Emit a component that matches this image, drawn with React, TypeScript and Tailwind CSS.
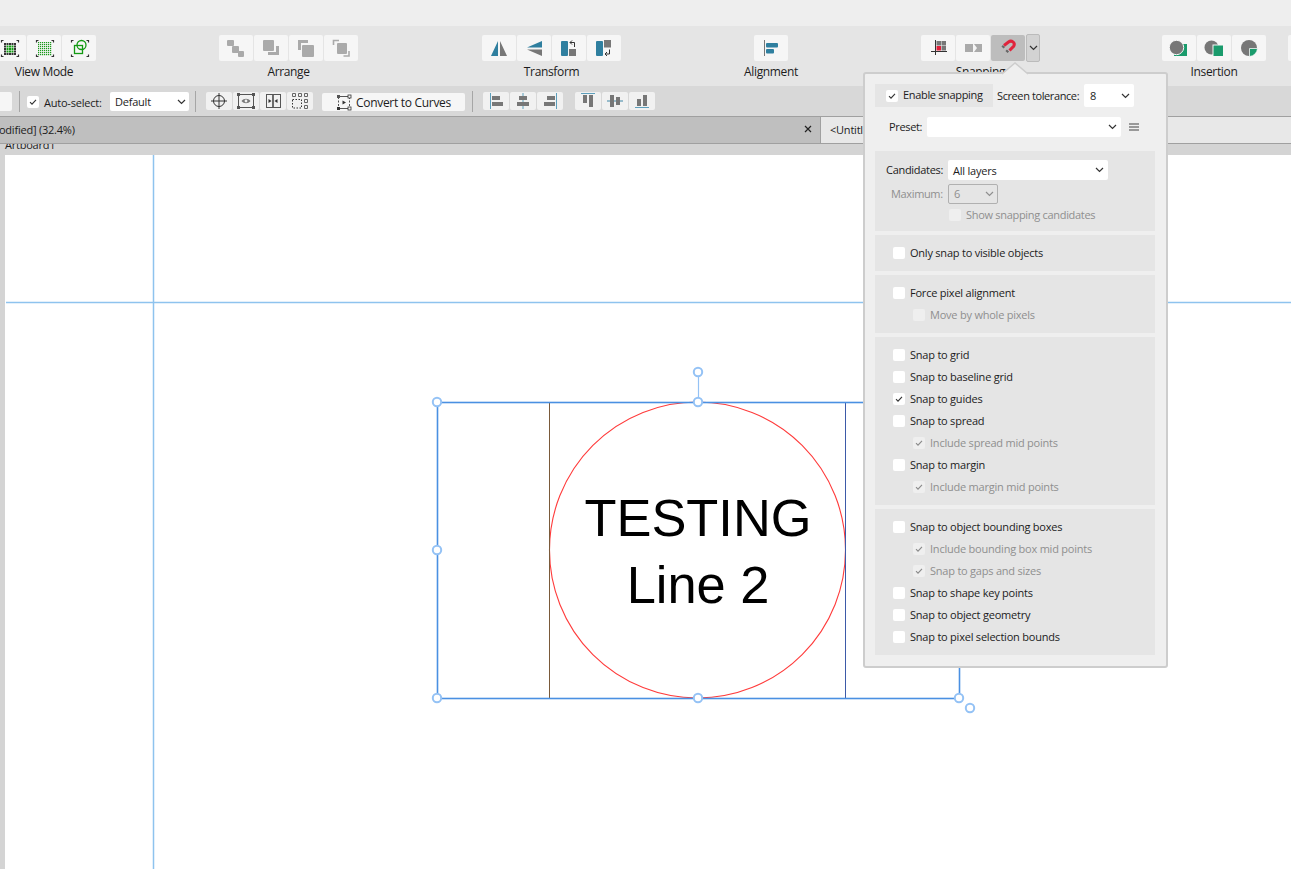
import React from "react";

const TEAL = "#2f7f9f";
const GREY = "#777777";
const LIGHT = "#aaaaaa";
const GREEN = "#1a9b6c";

function Chevron({ x = 0, color = "#333333" }: { x?: number; color?: string }) {
  return (
    <svg width="9" height="6" viewBox="0 0 9 6" className="shrink-0" style={{ marginLeft: x }}>
      <path d="M1 1 L4.5 4.5 L8 1" fill="none" stroke={color} strokeWidth="1.2" />
    </svg>
  );
}

function Tool({ children, active }: { children: React.ReactNode; active?: boolean }) {
  return (
    <div className={`h-[26px] w-[34px] rounded-[2px] ${active ? "bg-[#bdbdbd]" : "bg-[#f6f6f6]"}`}>
      <svg width="34" height="26" viewBox="0 0 34 26">
        {children}
      </svg>
    </div>
  );
}

function SmallTool({ children }: { children: React.ReactNode }) {
  return (
    <div className="h-[18px] w-[26px] rounded-[2px] bg-[#f1f1f1]">
      <svg width="26" height="18" viewBox="0 0 26 18">
        {children}
      </svg>
    </div>
  );
}

function Group({ label, children, className = "" }: { label: string; children: React.ReactNode; className?: string }) {
  return (
    <div className={`flex shrink-0 flex-col items-center ${className}`}>
      <div className="flex h-[26px] items-start gap-px">{children}</div>
      {/* zero width so a long label never widens a one-button group */}
      <div className="mt-[3px] flex w-0 justify-center whitespace-nowrap text-[12px] leading-[16px] tracking-[-0.35px] text-[#1c1c1c]">
        {label}
      </div>
    </div>
  );
}

function Corners({ x1, y1, x2, y2 }: { x1: number; y1: number; x2: number; y2: number }) {
  const d = `M${x1} ${y1 + 2}V${y1}H${x1 + 2} M${x2 - 2} ${y1}H${x2}V${y1 + 2} M${x2} ${y2 - 2}V${y2}H${x2 - 2} M${x1 + 2} ${y2}H${x1}V${y2 - 2}`;
  return <path d={d} fill="none" stroke="#333333" strokeWidth="1.2" />;
}

function DotGrid({ n, x, y, step, size, color, mid }: { n: number; x: number; y: number; step: number; size: number; color: string; mid?: string }) {
  const cells: React.ReactNode[] = [];
  for (let r = 0; r < n; r++) {
    for (let c = 0; c < n; c++) {
      const inner = mid && r > 0 && r < n - 1 && c > 0 && c < n - 1;
      cells.push(<rect key={`${r}-${c}`} x={x + c * step} y={y + r * step} width={size} height={size} fill={inner ? mid : color} />);
    }
  }
  return <>{cells}</>;
}

function Ribbon() {
  return (
    <div className="flex h-[60px] bg-[#e5e5e5] pt-[9px]">
      <Group label="View Mode" className="ml-[-8px]">
        <Tool>
          <Corners x1={9.5} y1={5.5} x2={26.5} y2={21.5} />
          <DotGrid n={5} x={12} y={8} step={2.5} size={2} color="#333333" mid="#139a13" />
        </Tool>
        <Tool>
          <Corners x1={9.5} y1={5.5} x2={26.5} y2={21.5} />
          <DotGrid n={7} x={11} y={7} step={2} size={1.2} color="#1c9a1c" />
        </Tool>
        <Tool>
          <Corners x1={9.5} y1={5.5} x2={26.5} y2={21.5} />
          <rect x="12.5" y="10.5" width="8" height="8" fill="none" stroke="#139a13" strokeWidth="1.3" />
          <circle cx="19.5" cy="10" r="4.5" fill="none" stroke="#139a13" strokeWidth="1.3" />
        </Tool>
      </Group>

      <Group label="Arrange" className="ml-[123px]">
        <Tool>
          <rect x="8" y="5" width="7" height="6" rx="1" fill={LIGHT} />
          <rect x="13" y="11" width="7" height="7" rx="1" fill={LIGHT} />
          <rect x="19" y="16" width="6" height="6" rx="1" fill={LIGHT} />
        </Tool>
        <Tool>
          <path d="M22 11H25V20H14V17H22Z" fill={LIGHT} />
          <rect x="9" y="5" width="11" height="11" rx="1" fill={LIGHT} />
        </Tool>
        <Tool>
          <path d="M9 5H19V8H12V15H9Z" fill={LIGHT} />
          <rect x="13" y="10" width="12" height="12" rx="1" fill={LIGHT} />
        </Tool>
        <Tool>
          <path d="M9.5 10V5.5H15M25 16V21H19.5" fill="none" stroke={LIGHT} strokeWidth="1.6" />
          <rect x="13" y="8" width="10" height="11" rx="1" fill={LIGHT} />
        </Tool>
      </Group>

      <Group label="Transform" className="ml-[124px]">
        <Tool>
          <path d="M9 21L16 6V21Z" fill={TEAL} />
          <path d="M18 6L25 21H18Z" fill={GREY} />
        </Tool>
        <Tool>
          <path d="M10 12.5L25 6V12.5Z" fill={TEAL} />
          <path d="M10 14.5H25V21Z" fill={GREY} />
        </Tool>
        <Tool>
          <rect x="9" y="6" width="7" height="15" rx="1" fill={TEAL} />
          <rect x="17" y="14" width="7" height="7" fill={GREY} />
          <path d="M22.5 12V7.5H18M20 5.5L18 7.5L20 9.5" fill="none" stroke="#333333" strokeWidth="1" />
        </Tool>
        <Tool>
          <rect x="9" y="6" width="7" height="15" rx="1" fill={TEAL} />
          <rect x="17" y="5" width="7" height="7.5" fill={GREY} />
          <path d="M22.5 14.5V19H18M20 17L18 19L20 21" fill="none" stroke="#333333" strokeWidth="1" />
        </Tool>
      </Group>

      <Group label="Alignment" className="ml-[133px]">
        <Tool>
          <rect x="10" y="5" width="1" height="16" fill={GREY} />
          <rect x="12" y="8" width="12" height="4.5" rx="1" fill={TEAL} />
          <rect x="12" y="14" width="8" height="4.5" rx="1" fill={TEAL} />
        </Tool>
      </Group>

      <Group label="Snapping" className="ml-[133px]">
        <Tool>
          <rect x="10" y="16" width="16" height="1" fill="#333333" />
          <rect x="14" y="5" width="1" height="15" fill="#333333" />
          <rect x="15.5" y="6" width="4.5" height="4.5" fill={GREY} />
          <rect x="20.5" y="6" width="4.5" height="4.5" fill={GREY} />
          <rect x="15.5" y="11" width="4.5" height="4.5" fill="#e0203a" />
          <rect x="20.5" y="11" width="4.5" height="4.5" fill={GREY} />
        </Tool>
        <Tool>
          <rect x="9" y="9" width="8" height="8" fill={LIGHT} />
          <path d="M18 9H26V17H18L21 13Z" fill={LIGHT} />
        </Tool>
        <Tool active>
          <path d="M13 10.5L17.5 7C20.5 4.8 24.6 7.6 22.8 11L18.5 15.5" fill="none" stroke="#e0243c" strokeWidth="3" />
          <path d="M11.5 12.5L13 11M15.5 17L17 15.5" fill="none" stroke="#666666" strokeWidth="3" />
        </Tool>
        <div className="flex h-[28px] w-[14px] -translate-y-px items-center justify-center rounded-[2px] border border-[#bbbbbb] bg-[#d3d3d3]">
          <Chevron />
        </div>
      </Group>

      <Group label="Insertion" className="ml-[122px]">
        <Tool>
          <path d="M19 9H25V21H12V17H19Z" fill={GREEN} />
          <circle cx="14.5" cy="12.5" r="7.2" fill={GREY} stroke="#f6f6f6" strokeWidth="1" />
        </Tool>
        <Tool>
          <circle cx="14.5" cy="12.5" r="7" fill={GREY} />
          <rect x="16" y="10" width="10.5" height="11.5" fill={GREEN} stroke="#f6f6f6" strokeWidth="1" />
        </Tool>
        <Tool>
          <circle cx="17" cy="13" r="8" fill={GREY} />
          <path d="M17.5 13.5H25.5A8.5 8.5 0 0 1 17.5 21.5Z" fill={GREEN} stroke="#f6f6f6" strokeWidth="0.8" />
        </Tool>
      </Group>

      <div className="ml-[22px] h-[26px] w-[34px] shrink-0 rounded-[2px] bg-[#f6f6f6]" />
    </div>
  );
}

function Divider({ className = "" }: { className?: string }) {
  return <div className={`mt-[-1px] h-[21px] w-px shrink-0 bg-[#a6a6a6] ${className}`} />;
}

function Check({ color = "#333333" }: { color?: string }) {
  return (
    <svg width="12" height="12" viewBox="0 0 12 12">
      <path d="M3 6.2L5 8.2L9 3.8" fill="none" stroke={color} strokeWidth="1.1" />
    </svg>
  );
}

function Box({ checked, disabled }: { checked?: boolean; disabled?: boolean }) {
  return (
    <div className={`h-[12px] w-[12px] shrink-0 rounded-[2px] ${disabled ? "bg-[#efefef]" : "bg-white"}`}>
      {checked ? <Check color={disabled ? "#8a8a8a" : "#333333"} /> : null}
    </div>
  );
}

function ContextBar() {
  return (
    <div className="flex h-[31px] items-start border-b border-[#a0a0a0] bg-[#d8d8d8] pt-[6px]">
      <div className="h-[19px] w-[12px] shrink-0 rounded-r-[2px] bg-[#f6f6f6]" />
      <Divider className="ml-[7px]" />
      <div className="ml-[7px] mt-[4px]">
        <Box checked />
      </div>
      <div className="ml-[5px] w-[62px] shrink-0 pt-[1px] text-[11px] leading-[19px] text-[#1c1c1c]">Auto-select:</div>
      <div className="ml-[4px] flex h-[19px] w-[79px] shrink-0 items-center justify-between rounded-[2px] bg-white pl-[5px] pr-[3px] pt-[1px] text-[11px] text-[#1c1c1c]">
        Default
        <Chevron />
      </div>
      <Divider className="ml-[6px]" />
      <div className="ml-[10px] flex gap-px">
        <SmallTool>
          <circle cx="13" cy="9" r="5.5" fill="none" stroke="#333333" strokeWidth="1" />
          <path d="M5 9H21M13 1V17" stroke="#333333" strokeWidth="1" />
        </SmallTool>
        <SmallTool>
          <rect x="5.5" y="2.5" width="15" height="13" fill="none" stroke="#555555" strokeWidth="1" />
          <path d="M8.5 9C11 6 15 6 17.5 9C15 12 11 12 8.5 9Z" fill="#777777" />
          <circle cx="13" cy="9" r="1.4" fill="#f1f1f1" />
          <path d="M4 1H7V4H4ZM19 1H22V4H19ZM4 14H7V17H4ZM19 14H22V17H19Z" fill="#555555" />
        </SmallTool>
        <SmallTool>
          <rect x="6.5" y="2.5" width="14" height="13" fill="none" stroke="#555555" strokeWidth="1" />
          <path d="M13 3V15" stroke="#333333" strokeWidth="1.4" />
          <path d="M8.5 7L11.5 9L8.5 11ZM17.5 7L14.5 9L17.5 11Z" fill="#333333" />
        </SmallTool>
        <SmallTool>
          <path d="M5.5 1.5h3v3h-3zM11.5 1.5h3v3h-3zM17.5 1.5h3v3h-3zM17.5 7.5h3v3h-3zM17.5 13.5h3v3h-3z" fill="none" stroke="#666666" strokeWidth="1" />
          <rect x="5.5" y="7.5" width="9" height="8.5" fill="none" stroke="#333333" strokeWidth="1" strokeDasharray="1.5 1.5" />
        </SmallTool>
      </div>
      <div className="ml-[9px] mt-[1px] flex h-[18px] w-[143px] shrink-0 items-center rounded-[2px] bg-[#f6f6f6] pl-[14px] text-[12px] tracking-[-0.3px] text-[#1c1c1c]">
        <svg width="16" height="17" viewBox="0 0 16 17" className="shrink-0">
          <path d="M2.5 2.5H13.5M2.5 14.5H13.5" stroke="#555555" strokeWidth="1" />
          <path d="M2.5 3V14M13.5 3V14" stroke="#555555" strokeWidth="1" strokeDasharray="2 1.5" />
          <path d="M6.5 6.5L10 8.5L6.5 10.5Z" fill="#333333" />
          <rect x="1" y="1" width="3" height="3" fill="#555555" />
          <rect x="12" y="1" width="3" height="3" fill="#f6f6f6" stroke="#333333" strokeWidth="0.8" />
          <rect x="1" y="13" width="3" height="3" fill="#333333" />
          <rect x="12" y="13" width="3" height="3" fill="#f6f6f6" stroke="#333333" strokeWidth="0.8" />
        </svg>
        <span className="ml-[4px] whitespace-nowrap pt-[1px]">Convert to Curves</span>
      </div>
      <Divider className="ml-[7px]" />
      <div className="ml-[10px] flex gap-px">
        <SmallTool>
          <rect x="7" y="1" width="1" height="16" fill="#5d9fbc" />
          <rect x="9" y="4" width="8" height="4" fill={GREY} />
          <rect x="9" y="10" width="11" height="4" fill={GREY} />
        </SmallTool>
        <SmallTool>
          <rect x="12.5" y="1" width="1" height="16" fill="#5d9fbc" />
          <rect x="9" y="4" width="8" height="4" fill={GREY} />
          <rect x="7" y="10" width="12" height="4" fill={GREY} />
        </SmallTool>
        <SmallTool>
          <rect x="19" y="1" width="1" height="16" fill="#5d9fbc" />
          <rect x="10" y="4" width="8" height="4" fill={GREY} />
          <rect x="7" y="10" width="11" height="4" fill={GREY} />
        </SmallTool>
      </div>
      <div className="ml-[12px] flex gap-px">
        <SmallTool>
          <rect x="6" y="1" width="14" height="1" fill="#5d9fbc" />
          <rect x="8" y="3" width="4" height="8" fill={GREY} />
          <rect x="14" y="3" width="4" height="12" fill={GREY} />
        </SmallTool>
        <SmallTool>
          <rect x="5" y="8.5" width="16" height="1" fill="#3f86a6" />
          <rect x="8" y="3" width="4" height="12" fill={GREY} />
          <rect x="14" y="5" width="4" height="8" fill={GREY} />
        </SmallTool>
        <SmallTool>
          <rect x="6" y="15" width="14" height="1" fill="#5d9fbc" />
          <rect x="8" y="7" width="4" height="7" fill={GREY} />
          <rect x="14" y="3" width="4" height="11" fill={GREY} />
        </SmallTool>
      </div>
    </div>
  );
}

function TabBar() {
  return (
    <div className="flex h-[27px] border-b border-[#a0a0a0] text-[11px] text-[#1c1c1c]">
      <div className="flex w-[821px] shrink-0 items-center justify-between overflow-hidden border-r border-[#a0a0a0] bg-[#bfbfbf] pr-[8px]">
        <span className="ml-[-11px] whitespace-nowrap pt-[1px]">modified] (32.4%)</span>
        <svg width="8" height="8" viewBox="0 0 8 8" className="mb-[2px]">
          <path d="M1 1L7 7M7 1L1 7" stroke="#222222" strokeWidth="1.2" />
        </svg>
      </div>
      <div className="flex-1 bg-[#e8e8e8] pl-[9px] leading-[26px]">&lt;Untitled&gt;</div>
    </div>
  );
}

function Handle({ x, y }: { x: number; y: number }) {
  return <circle cx={x} cy={y} r="4.2" fill="#ffffff" stroke="#94c2f5" strokeWidth="2" />;
}

function Canvas() {
  return (
    <div className="relative flex-1 bg-white">
      <svg className="absolute inset-0" width="1286" height="714" viewBox="5 155 1286 714">
        <path d="M153.5 155V869" stroke="#8ec3ee" strokeWidth="1.5" />
        <path d="M6 302.5H1291" stroke="#8ec3ee" strokeWidth="1.5" />
        <circle cx="697.5" cy="550" r="148" fill="none" stroke="#ff3b3b" strokeWidth="1.1" />
        <path d="M549.5 402V698" stroke="#7a5a3a" strokeWidth="1" />
        <path d="M845.5 402V698" stroke="#3d5aa8" strokeWidth="1" />
        <path d="M698.5 372V402" stroke="#94c2f5" strokeWidth="1.2" />
        <rect x="437.5" y="402.5" width="522" height="296" fill="none" stroke="#4a90e2" strokeWidth="1.6" />
        <Handle x={698} y={372} />
        <Handle x={437} y={402} />
        <Handle x={698} y={402} />
        <Handle x={437} y={550} />
        <Handle x={437} y={698} />
        <Handle x={698} y={698} />
        <Handle x={959} y={698} />
        <Handle x={970} y={708} />
      </svg>
      <div className="absolute left-[393px] top-[330px] w-[600px] text-center font-['Liberation_Sans',sans-serif] text-[52.4px] leading-[67px] tracking-[0px] text-black">
        TESTING
        <br />
        Line 2
      </div>
    </div>
  );
}

function Row({ label, checked, disabled, indent }: { label: string; checked?: boolean; disabled?: boolean; indent?: boolean }) {
  return (
    <div className={`flex h-[22px] items-center gap-[5px] ${indent ? "pl-[38px]" : "pl-[18px]"} ${disabled ? "text-[#8f8f8f]" : "text-[#1c1c1c]"}`}>
      <Box checked={checked} disabled={disabled} />
      <span className="whitespace-nowrap">{label}</span>
    </div>
  );
}

function Section({ children }: { children: React.ReactNode }) {
  return <div className="bg-[#e5e5e5] py-[7px]">{children}</div>;
}

function SnappingPopover() {
  return (
    <div className="absolute left-[863px] top-[72px] h-[596px] w-[305px] rounded-[3px] border-2 border-[#cdcdcd] bg-[#efefef] pl-[10px] pr-[11px] pt-[10px] text-[11px] text-[#1c1c1c]">
      <svg width="28" height="13" viewBox="0 0 28 13" className="absolute left-[136px] top-[-12px]">
        <path d="M1 12L14 1L27 12" fill="#efefef" stroke="#cdcdcd" strokeWidth="1.5" />
      </svg>

      <div className="flex h-[23px] items-center">
        <div className="flex h-[23px] w-[118px] items-center gap-[5px] bg-[#e5e5e5] pl-[11px]">
          <Box checked />
          <span className="whitespace-nowrap tracking-[-0.33px]">Enable snapping</span>
        </div>
        <span className="ml-[4px] w-[87px] whitespace-nowrap pt-[1px] tracking-[-0.4px]">Screen tolerance:</span>
        <div className="flex h-[23px] w-[50px] items-center justify-between rounded-[2px] bg-white pl-[6px] pr-[4px] pt-[1px]">
          8
          <Chevron />
        </div>
      </div>

      <div className="mt-[10px] flex h-[20px] items-center">
        <span className="ml-[14px] w-[38px] tracking-[-0.35px]">Preset:</span>
        <div className="flex h-[20px] w-[194px] items-center justify-end rounded-[2px] bg-white pr-[4px]">
          <Chevron />
        </div>
        <svg width="10" height="8" viewBox="0 0 10 8" className="ml-[8px]">
          <path d="M0 1H10M0 4H10M0 7H10" stroke="#444444" strokeWidth="1.2" />
        </svg>
      </div>

      <div className="mt-[14px] h-[80px] bg-[#e5e5e5] pl-[11px] pt-[9px]">
        <div className="flex h-[20px] items-center">
          <span className="w-[62px] whitespace-nowrap pt-[1px] tracking-[-0.3px]">Candidates:</span>
          <div className="flex h-[20px] w-[160px] items-center justify-between rounded-[2px] bg-white pl-[5px] pr-[4px]">
            <span className="pt-[2px]">All layers</span>
            <Chevron />
          </div>
        </div>
        <div className="mt-[4px] flex h-[20px] items-center text-[#8f8f8f]">
          <span className="ml-[5px] w-[57px] whitespace-nowrap tracking-[-0.35px]">Maximum:</span>
          <div className="flex h-[20px] w-[50px] items-center justify-between rounded-[2px] border border-[#b0b0b0] pl-[5px] pr-[3px]">
            6
            <Chevron color="#8f8f8f" />
          </div>
        </div>
        <div className="ml-[63px] mt-[5px] flex h-[12px] items-center gap-[5px] text-[#8f8f8f]">
          <Box disabled />
          <span className="whitespace-nowrap tracking-[-0.3px]">Show snapping candidates</span>
        </div>
      </div>

      <div className="mt-[4px] flex flex-col gap-[4px]">
        <Section>
          <Row label="Only snap to visible objects" />
        </Section>
        <Section>
          <Row label="Force pixel alignment" />
          <Row label="Move by whole pixels" disabled indent />
        </Section>
        <Section>
          <Row label="Snap to grid" />
          <Row label="Snap to baseline grid" />
          <Row label="Snap to guides" checked />
          <Row label="Snap to spread" />
          <Row label="Include spread mid points" checked disabled indent />
          <Row label="Snap to margin" />
          <Row label="Include margin mid points" checked disabled indent />
        </Section>
        <Section>
          <Row label="Snap to object bounding boxes" />
          <Row label="Include bounding box mid points" checked disabled indent />
          <Row label="Snap to gaps and sizes" checked disabled indent />
          <Row label="Snap to shape key points" />
          <Row label="Snap to object geometry" />
          <Row label="Snap to pixel selection bounds" />
        </Section>
      </div>
    </div>
  );
}

export default function App() {
  return (
    <div className="relative flex h-[869px] w-[1291px] flex-col overflow-hidden bg-[#eeeeee] font-['Open_Sans',sans-serif] tracking-[-0.22px]">
      <div className="h-[26px] shrink-0" />
      <Ribbon />
      <ContextBar />
      <TabBar />
      <div className="h-[11px] shrink-0 overflow-hidden bg-[#d4d4d4] pl-[5px]">
        <div className="mt-[-6px] text-[11px] leading-[13px] text-[#1c1c1c]">Artboard1</div>
      </div>
      <div className="flex flex-1">
        <div className="w-[5px] shrink-0 bg-[#d4d4d4]" />
        <Canvas />
      </div>
      <SnappingPopover />
    </div>
  );
}
